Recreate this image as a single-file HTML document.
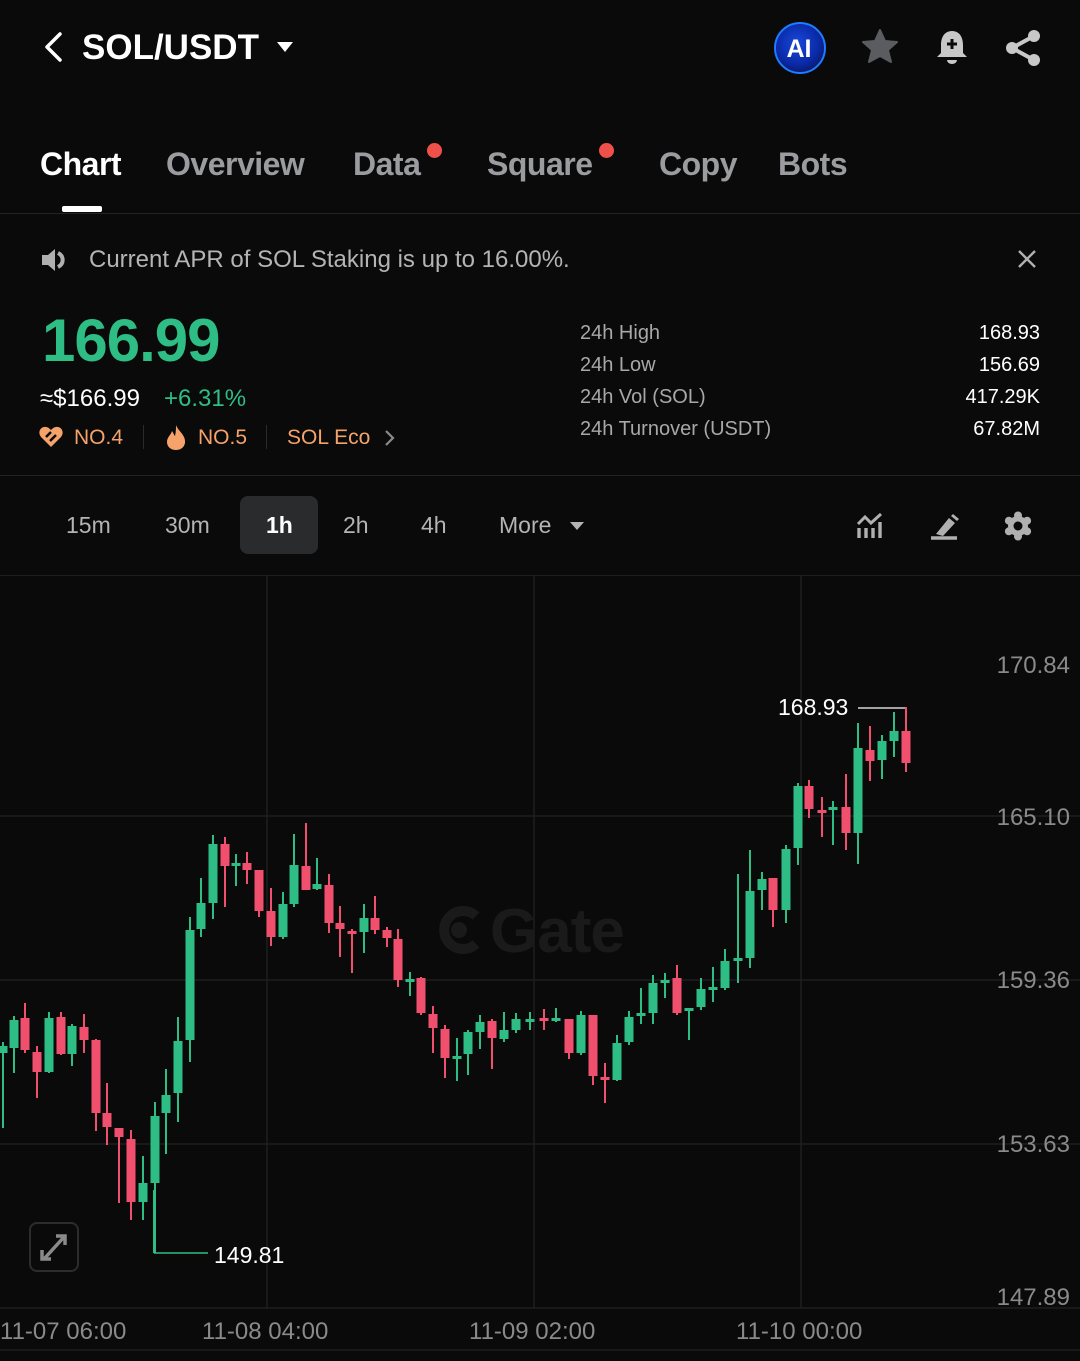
<!DOCTYPE html>
<html><head><meta charset="utf-8"><style>
*{margin:0;padding:0;box-sizing:border-box}
body{width:1080px;height:1361px;background:#0a0a0a;font-family:"Liberation Sans",sans-serif;position:relative;overflow:hidden;color:#fff}
.a{position:absolute;white-space:nowrap}
.tab{position:absolute;top:146px;font-size:32px;font-weight:bold;color:#9a9c9f;letter-spacing:-0.5px}
.dot{position:absolute;width:15px;height:15px;border-radius:50%;background:#f0504a}
.lbl{color:#a8a8a8;font-size:20px}
.val{color:#fff;font-size:20px;text-align:right;right:40px}
.tf{position:absolute;top:512px;font-size:23px;color:#b4b4b4}
</style></head><body>
<svg class="a" style="left:38px;top:30px" width="30" height="34"><path d="M22 4 L9 17 L22 30" stroke="#fff" stroke-width="3.5" fill="none" stroke-linecap="round" stroke-linejoin="round"/></svg>
<div class="a" style="left:82px;top:28px;font-size:35px;font-weight:bold">SOL/USDT</div>
<svg class="a" style="left:276px;top:41px" width="18" height="12"><path d="M1 1 L17 1 L9 11Z" fill="#fff"/></svg>
<svg class="a" style="left:773px;top:21px" width="54" height="54"><defs><radialGradient id="g" cx="45%" cy="40%" r="60%"><stop offset="0" stop-color="#1848d8"/><stop offset="0.7" stop-color="#0a2aa8"/><stop offset="1" stop-color="#0a1a70"/></radialGradient></defs><circle cx="27" cy="27" r="25" fill="url(#g)" stroke="#1f7bff" stroke-width="2"/><text x="26" y="36" text-anchor="middle" font-family="Liberation Sans" font-weight="bold" font-size="25" fill="#fff">AI</text></svg>
<svg class="a" style="left:861px;top:28px" width="38" height="38"><path d="M19 2 L24 13 L36 14 L27 22 L30 34 L19 28 L8 34 L11 22 L2 14 L14 13Z" fill="#5a5c60" stroke="#5a5c60" stroke-width="2" stroke-linejoin="round"/></svg>
<svg class="a" style="left:934px;top:28px" width="36" height="38"><path d="M18 3 C10 3 7 10 7 17 L7 25 L3 29 L33 29 L29 25 L29 17 C29 10 26 3 18 3Z" fill="#c8c8c8"/><path d="M13 32 A5 4 0 0 0 23 32Z" fill="#c8c8c8"/><path d="M18 11 V21 M13 16 H23" stroke="#0a0a0a" stroke-width="3"/></svg>
<svg class="a" style="left:1004px;top:28px" width="38" height="40"><circle cx="30" cy="8" r="6" fill="#c8c8c8"/><circle cx="8" cy="20" r="6" fill="#c8c8c8"/><circle cx="30" cy="32" r="6" fill="#c8c8c8"/><path d="M30 8 L8 20 L30 32" stroke="#c8c8c8" stroke-width="4" fill="none"/></svg>
<div class="tab" style="left:40px;color:#fff">Chart</div>
<div class="tab" style="left:166px">Overview</div>
<div class="tab" style="left:353px">Data</div><div class="dot" style="left:427px;top:143px"></div>
<div class="tab" style="left:487px">Square</div><div class="dot" style="left:599px;top:143px"></div>
<div class="tab" style="left:659px">Copy</div>
<div class="tab" style="left:778px">Bots</div>
<div class="a" style="left:62px;top:206px;width:40px;height:6px;border-radius:2px;background:#fff"></div>
<div class="a" style="left:0;top:213px;width:1080px;height:1px;background:#232323"></div>
<svg class="a" style="left:40px;top:247px" width="30" height="26"><path d="M2 8 H8 L15 2 V24 L8 18 H2Z" fill="#b0b0b0"/><path d="M18 6 A9 8 0 0 1 18 20" stroke="#b0b0b0" stroke-width="4" fill="none"/></svg>
<div class="a" style="left:89px;top:246px;font-size:24px;color:#b4b4b4">Current APR of SOL Staking is up to 16.00%.</div>
<svg class="a" style="left:1017px;top:249px" width="20" height="20"><path d="M2 2 L18 18 M18 2 L2 18" stroke="#b0b0b0" stroke-width="2.4"/></svg>
<div class="a" style="left:42px;top:306px;font-size:60px;font-weight:bold;color:#2ebd85;letter-spacing:-1px">166.99</div>
<div class="a" style="left:40px;top:385px;font-size:24px">≈$166.99</div>
<div class="a" style="left:164px;top:385px;font-size:24px;color:#2ebd85">+6.31%</div>
<svg class="a" style="left:38px;top:425px" width="26" height="24"><path d="M13 22 L3 12 C-1 7 3 1 8 2 C10 2 12 4 13 5 C14 4 16 2 18 2 C23 1 27 7 23 12Z" fill="#f5a36a"/><path d="M8 12 L13 7 M12 16 L18 10" stroke="#0a0a0a" stroke-width="2.5"/></svg>
<div class="a" style="left:74px;top:426px;font-size:21px;color:#f5a36a">NO.4</div>
<div class="a" style="left:143px;top:425px;width:1px;height:24px;background:#2a2a2a"></div>
<svg class="a" style="left:164px;top:423px" width="24" height="28"><path d="M12 2 C14 8 22 12 21 20 C20 25 16 27 12 27 C7 27 3 24 3 19 C3 14 7 12 8 8 C10 11 10 12 11 13 C12 9 12 5 12 2Z" fill="#f5a36a"/></svg>
<div class="a" style="left:198px;top:426px;font-size:21px;color:#f5a36a">NO.5</div>
<div class="a" style="left:266px;top:425px;width:1px;height:24px;background:#2a2a2a"></div>
<div class="a" style="left:287px;top:426px;font-size:21px;color:#f5a36a">SOL Eco</div>
<svg class="a" style="left:383px;top:429px" width="14" height="18"><path d="M3 2 L10 9 L3 16" stroke="#8a8a8a" stroke-width="2.2" fill="none"/></svg>
<div class="a lbl" style="left:580px;top:322px">24h High</div><div class="a val" style="top:322px">168.93</div>
<div class="a lbl" style="left:580px;top:354px">24h Low</div><div class="a val" style="top:354px">156.69</div>
<div class="a lbl" style="left:580px;top:386px">24h Vol (SOL)</div><div class="a val" style="top:386px">417.29K</div>
<div class="a lbl" style="left:580px;top:418px">24h Turnover (USDT)</div><div class="a val" style="top:418px">67.82M</div>
<div class="a" style="left:0;top:475px;width:1080px;height:1px;background:#232323"></div>
<div class="a" style="left:240px;top:496px;width:78px;height:58px;border-radius:8px;background:#2a2b2d"></div>
<div class="tf" style="left:66px">15m</div>
<div class="tf" style="left:165px">30m</div>
<div class="tf" style="left:266px;color:#fff;font-weight:bold">1h</div>
<div class="tf" style="left:343px">2h</div>
<div class="tf" style="left:421px">4h</div>
<div class="tf" style="left:499px">More</div>
<svg class="a" style="left:569px;top:521px" width="16" height="10"><path d="M1 1 H15 L8 9Z" fill="#b4b4b4"/></svg>
<svg class="a" style="left:856px;top:512px" width="30" height="28"><path d="M2 12 L9 5 L15 11 L25 2" stroke="#b0b0b0" stroke-width="3" fill="none"/><path d="M3 16 V26 M10 16 V26 M17 16 V26 M24 10 V26" stroke="#b0b0b0" stroke-width="3.4"/></svg>
<svg class="a" style="left:929px;top:512px" width="32" height="28"><path d="M7 22 L20 6 L26 11 L14 24Z M22 4 L24 2 L30 7 L28 9Z" fill="#b0b0b0"/><path d="M2 26 H28" stroke="#b0b0b0" stroke-width="3.5"/></svg>
<svg class="a" style="left:1003px;top:511px" width="30" height="30"><g fill="#b0b0b0"><circle cx="15" cy="15" r="10"/><circle cx="15" cy="4.5" r="4"/><circle cx="15" cy="25.5" r="4"/><circle cx="5.9" cy="9.7" r="4"/><circle cx="24.1" cy="9.7" r="4"/><circle cx="5.9" cy="20.3" r="4"/><circle cx="24.1" cy="20.3" r="4"/></g><circle cx="15" cy="15" r="4.5" fill="#0a0a0a"/></svg>
<div class="a" style="left:0;top:575px;width:1080px;height:1px;background:#1e1e1e"></div>
<svg class="a" style="left:0;top:0" width="1080" height="1361">
<g stroke="#1e1e1e" stroke-width="1.5">
<line x1="267" y1="576" x2="267" y2="1308"/><line x1="534" y1="576" x2="534" y2="1308"/><line x1="801" y1="576" x2="801" y2="1308"/>
<line x1="0" y1="816" x2="1080" y2="816"/><line x1="0" y1="980" x2="1080" y2="980"/><line x1="0" y1="1144" x2="1080" y2="1144"/>
<line x1="0" y1="1308" x2="1080" y2="1308"/><line x1="0" y1="1350" x2="1080" y2="1350"/>
</g>
<path d="M476 916 A19 19 0 1 0 476 944" stroke="#1a1a1a" stroke-width="10" fill="none"/><circle cx="459" cy="930" r="8" fill="#1a1a1a"/>
<text x="490" y="952" font-family="Liberation Sans" font-weight="bold" font-size="62" fill="#1a1a1a" letter-spacing="-1">Gate</text>
<g font-family="Liberation Sans" font-size="24" fill="#8a8a8a" text-anchor="end">
<text x="1070" y="673">170.84</text><text x="1070" y="825">165.10</text><text x="1070" y="988">159.36</text><text x="1070" y="1152">153.63</text><text x="1070" y="1305">147.89</text>
</g>
<g font-family="Liberation Sans" font-size="24" fill="#8a8a8a">
<text x="0" y="1339">11-07 06:00</text><text x="202" y="1339">11-08 04:00</text><text x="469" y="1339">11-09 02:00</text><text x="736" y="1339">11-10 00:00</text>
</g>
<path d="M154 1253 H208" stroke="#2ebd85" stroke-width="1.5"/><path d="M154 1253 V1190" stroke="#2ebd85" stroke-width="2"/>
<path d="M858 708 H906 V730" stroke="#fff" stroke-width="1.2" fill="none"/>
<text x="214" y="1263" font-family="Liberation Sans" font-size="23" fill="#fff">149.81</text>
<text x="778" y="715" font-family="Liberation Sans" font-size="23" fill="#fff">168.93</text>
<rect x="30" y="1223" width="48" height="48" rx="7" fill="none" stroke="#2c2c2c" stroke-width="2"/>
<path d="M44 1259 L64 1237 M56 1236 H65 V1245 M42 1250 V1259 H51" stroke="#8a8a8a" stroke-width="3.5" fill="none"/>
<g id="c"></g>
</svg>
<script>
var d=[[3,1046,1053,1042,1128,1],[14,1020,1048,1016,1073,1],[25,1018,1050,1003,1053,0],[37,1052,1072,1046,1098,0],[49,1018,1072,1012,1073,1],[61,1017,1054,1012,1055,0],[72,1026,1054,1024,1066,1],[84,1027,1040,1014,1053,0],[96,1040,1113,1039,1131,0],[107,1113,1127,1083,1145,0],[119,1128,1137,1128,1203,0],[131,1139,1202,1130,1220,0],[143,1183,1202,1156,1220,1],[155,1116,1183,1102,1253,1],[166,1095,1113,1069,1154,1],[178,1041,1093,1017,1122,1],[190,930,1040,917,1062,1],[201,903,929,878,937,1],[213,844,903,835,919,1],[225,844,866,837,907,0],[236,863,865,854,886,1],[247,863,870,852,884,0],[259,870,911,870,917,0],[271,911,937,888,946,0],[283,904,937,892,939,1],[294,865,904,834,907,1],[306,866,890,823,890,0],[317,884,889,858,890,1],[329,885,923,874,933,0],[340,923,929,906,957,0],[352,931,933,929,973,0],[364,918,932,904,953,1],[375,918,930,896,934,0],[387,930,938,927,947,0],[398,939,980,929,987,0],[410,979,981,972,996,1],[421,978,1013,977,1015,0],[433,1014,1028,1006,1053,0],[445,1029,1058,1025,1078,0],[457,1056,1058,1038,1081,1],[468,1032,1054,1030,1075,1],[480,1022,1032,1015,1049,1],[492,1021,1038,1019,1069,0],[504,1030,1039,1012,1042,1],[516,1019,1030,1013,1033,1],[530,1019,1021,1012,1030,1],[544,1018,1020,1009,1030,0],[556,1018,1020,1008,1022,1],[569,1019,1053,1019,1059,0],[581,1015,1053,1011,1055,1],[593,1015,1076,1015,1085,0],[605,1077,1079,1063,1103,0],[617,1043,1080,1035,1081,1],[629,1017,1042,1011,1045,1],[641,1013,1015,988,1024,1],[653,983,1013,975,1024,1],[665,980,982,973,998,1],[677,978,1013,965,1015,0],[689,1008,1011,1008,1040,1],[701,989,1007,978,1010,1],[713,987,989,967,1002,1],[725,961,988,949,990,1],[738,958,960,874,983,1],[750,891,958,850,968,1],[762,879,890,872,910,1],[773,878,910,878,927,0],[786,849,910,845,923,1],[798,786,848,783,865,1],[809,786,809,780,818,0],[822,810,812,797,837,0],[833,807,809,801,845,1],[846,807,833,774,850,0],[858,748,833,723,864,1],[870,750,761,726,781,0],[882,741,760,735,779,1],[894,731,741,712,757,1],[906,731,763,707,772,0]];
var s='';d.forEach(function(c){var col=c[5]?'#2ebd85':'#f0506e';var h=Math.max(c[2]-c[1],3);s+='<line x1="'+c[0]+'" y1="'+c[3]+'" x2="'+c[0]+'" y2="'+c[4]+'" stroke="'+col+'" stroke-width="2"/><rect x="'+(c[0]-4.5)+'" y="'+c[1]+'" width="9" height="'+h+'" fill="'+col+'"/>';});
document.getElementById('c').innerHTML=s;
</script>
</body></html>
